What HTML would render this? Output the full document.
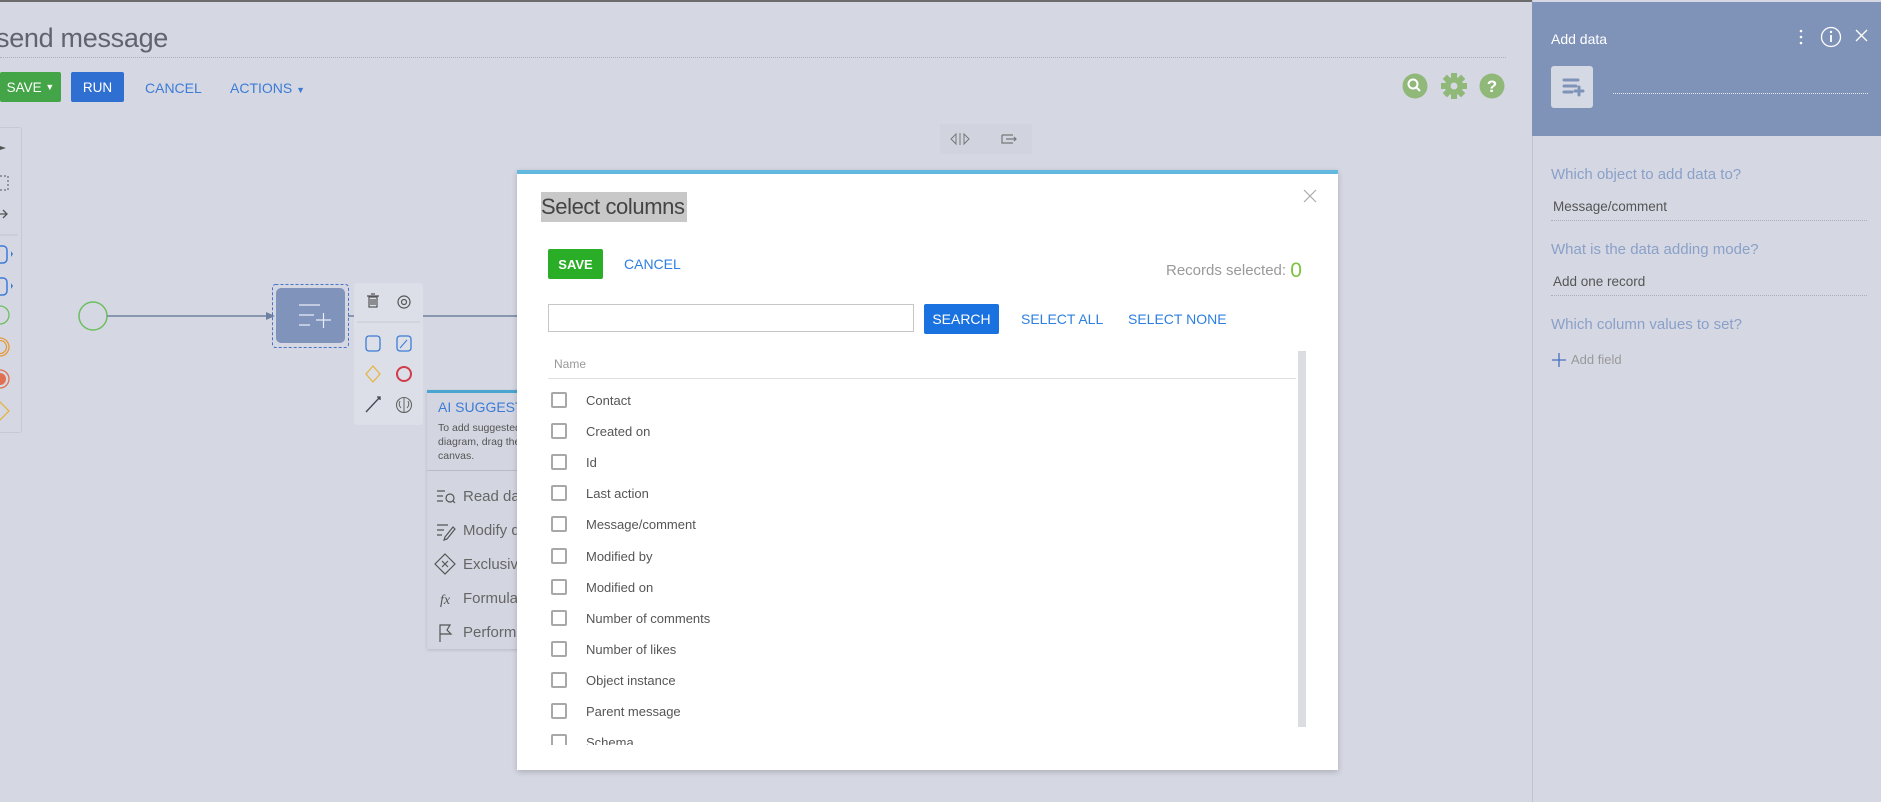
<!DOCTYPE html>
<html><head><meta charset="utf-8"><style>
*{margin:0;padding:0;box-sizing:border-box}
body{width:1881px;height:802px;overflow:hidden;background:#d5d8e3;font-family:"Liberation Sans",sans-serif;position:relative}
.a{position:absolute;white-space:nowrap}
.topline{left:0;top:0;width:1881px;height:2px;background:#6c6c6c}
.btn{position:absolute;color:#fff;font-size:14px;display:flex;align-items:center;justify-content:center;border-radius:2px}
.lnk{position:absolute;color:#3d7bd6;font-size:14px;white-space:nowrap}
.row{position:absolute;left:551px;height:20px;display:flex;align-items:center}
.cb{width:16px;height:16px;border:2px solid #a8a8a8;border-radius:2px;margin-right:19px}
.row span{font-size:13px;color:#555}
.lab{position:absolute;left:1551px;font-size:15px;color:#8aa0c8}
.val{position:absolute;left:1553px;font-size:13.5px;color:#555}
.dl{position:absolute;left:1551px;width:316px;border-top:1px dotted #a9adbd}
.ai{position:absolute;left:463px;font-size:15px;color:#666}
</style></head><body>
<div class="a topline"></div>
<div class="a" style="left:-4px;top:23px;font-size:27px;color:#5f6470;letter-spacing:-0.3px">send message</div>
<div class="a" style="left:0;top:57px;width:1506px;border-top:1px dotted #aab0c0"></div>
<div class="btn" style="left:0;top:72px;width:61px;height:30px;background:#43a547;font-size:13.5px">SAVE&nbsp;<span style="font-size:9px">▼</span></div>
<div class="btn" style="left:71px;top:72px;width:53px;height:30px;background:#2f6fd1;font-size:13.5px">RUN</div>
<div class="lnk" style="left:145px;top:80px">CANCEL</div>
<div class="lnk" style="left:230px;top:80px">ACTIONS <span style="font-size:9px">▼</span></div>
<svg class="a" style="left:1400px;top:72px" width="110" height="28">
<circle cx="15" cy="14" r="12.5" fill="#8fb879"/><circle cx="13" cy="12" r="4.5" fill="none" stroke="#fff" stroke-width="2"/><line x1="16" y1="15" x2="20" y2="19" stroke="#fff" stroke-width="2"/>
<g transform="translate(54,14)" fill="#8fb879"><circle r="9"/><rect x="-3" y="-13" width="6" height="26"/><rect x="-13" y="-3" width="26" height="6"/><rect x="-3" y="-13" width="6" height="26" transform="rotate(45)"/><rect x="-3" y="-13" width="6" height="26" transform="rotate(-45)"/><circle r="3.5" fill="#d5d8e3"/></g>
<circle cx="92" cy="14" r="12.5" fill="#8fb879"/><text x="92" y="20" text-anchor="middle" font-size="17" font-weight="bold" fill="#fff" font-family="Liberation Sans">?</text>
</svg>
<div class="a" style="left:940px;top:124px;width:92px;height:30px;background:#d1d4df"></div>
<svg class="a" style="left:950px;top:131px" width="70" height="16"><path d="M6 3 L1 8 L6 13Z M14 3 L19 8 L14 13Z" fill="none" stroke="#777" stroke-width="1"/><line x1="10" y1="2" x2="10" y2="14" stroke="#777"/><path d="M52 4 H63 M52 4 V12 H63 M56 8 H66 M64 6 L66 8 L64 10" fill="none" stroke="#777" stroke-width="1.2"/></svg>
<div class="a" style="left:-5px;top:127px;width:27px;height:306px;border:1px solid #c5c9d5;border-radius:3px;background:#d5d8e3"></div>
<svg class="a" style="left:0;top:130px" width="22" height="300">
<path d="M0 16 L6 18 L0 20Z" fill="#555"/>
<rect x="-4" y="46" width="12" height="14" fill="none" stroke="#555" stroke-dasharray="2 2"/>
<path d="M0 84 H6 M3 80 L7 84 L3 88" fill="none" stroke="#555" stroke-width="1.3"/>
<line x1="0" y1="105" x2="18" y2="105" stroke="#c0c4d0"/>
<rect x="-6" y="116" width="13" height="17" rx="4" fill="none" stroke="#3d7bd6" stroke-width="1.5"/><path d="M11 121 L13 124 L11 127Z" fill="#3d7bd6"/>
<rect x="-6" y="148" width="13" height="17" rx="4" fill="none" stroke="#3d7bd6" stroke-width="1.5"/><path d="M11 153 L13 156 L11 159Z" fill="#3d7bd6"/>
<circle cx="0" cy="185" r="9" fill="none" stroke="#6cbf5e" stroke-width="1.3"/>
<circle cx="0" cy="217" r="9" fill="none" stroke="#e69a3c" stroke-width="1.3"/><circle cx="0" cy="217" r="6.5" fill="none" stroke="#e69a3c" stroke-width="1.3"/>
<circle cx="0" cy="249" r="9" fill="none" stroke="#e07050" stroke-width="1.3"/><circle cx="0" cy="249" r="6" fill="#e07050"/>
<path d="M-2 270 L9 281 L-2 292" fill="none" stroke="#e6b23c" stroke-width="1.3"/>
</svg>
<svg class="a" style="left:0;top:270px" width="520" height="160">
<circle cx="93" cy="46" r="14" fill="none" stroke="#6cbf5e" stroke-width="1.5"/>
<line x1="107" y1="46" x2="268" y2="46" stroke="#6f80a0" stroke-width="1.5"/><path d="M266 42 L275 46 L266 50Z" fill="#6f80a0"/>
<line x1="348" y1="46" x2="520" y2="46" stroke="#6f80a0" stroke-width="1.5"/>
<rect x="272.5" y="14.5" width="76" height="63" rx="3" fill="none" stroke="#4b74c7" stroke-dasharray="3 2"/>
<rect x="276" y="18" width="69" height="55" rx="5" fill="#7f93bb"/>
<path d="M299 35 H320 M299 45 H314 M299 55 H310 M316 50 H331 M323.5 43 V58" stroke="#e8ecf5" stroke-width="1.2"/>
<rect x="354" y="13" width="69" height="142" rx="3" fill="#dcdfe8"/>
<line x1="357" y1="52" x2="420" y2="52" stroke="#c4c8d4"/>
<g fill="none" stroke="#555" stroke-width="1.2"><rect x="369" y="27" width="8" height="10"/><path d="M367 26 H379 M371 24 H375 M371 29 V35 M373 29 V35 M375 29 V35"/>
<circle cx="404" cy="32" r="6"/><circle cx="404" cy="32" r="2.5"/></g>
<rect x="366" y="66" width="14" height="15" rx="3" fill="none" stroke="#3d7bd6" stroke-width="1.3"/>
<rect x="397" y="66" width="14" height="15" rx="3" fill="none" stroke="#3d7bd6" stroke-width="1.3"/><path d="M400 78 L407 70" stroke="#3d7bd6"/>
<path d="M373 96 L380 104 L373 112 L366 104Z" fill="none" stroke="#e6b23c" stroke-width="1.2"/>
<circle cx="404" cy="104" r="7" fill="none" stroke="#d03c4c" stroke-width="2"/>
<path d="M366 142 L380 127 M377 127 H380 V130" fill="none" stroke="#445" stroke-width="1.3"/>
<circle cx="404" cy="135" r="7.5" fill="none" stroke="#666" stroke-width="1.1"/><path d="M404 128 V142 M400 131 Q398 135 401 138 M408 131 Q410 135 407 138" fill="none" stroke="#666"/>
</svg>
<div class="a" style="left:427px;top:390px;width:95px;height:259px;background:#d3d6e1;border-top:3px solid #4aa6cf;box-shadow:0 1px 3px rgba(0,0,0,.15)"></div>
<div class="a" style="left:438px;top:399px;font-size:14px;color:#3d7bd6">AI SUGGESTIONS</div>
<div class="a" style="left:438px;top:421px;font-size:10.5px;color:#555;line-height:14px">To add suggested<br>diagram, drag the<br>canvas.</div>
<div class="a" style="left:427px;top:470px;width:95px;border-top:1px solid #b8bcc8"></div>
<svg class="a" style="left:430px;top:480px" width="30" height="165" fill="none" stroke="#555" stroke-width="1.2">
<path d="M7 11 H15 M7 16 H13 M7 21 H13"/><circle cx="20" cy="18" r="4"/><path d="M23 21 L25 23"/>
<path d="M7 45 H18 M7 50 H14 M7 55 H12 M15 57 L23 47 L25 49 L17 59 L14 60Z"/>
<path d="M15 74 L25 84 L15 94 L5 84Z M12 81 L18 87 M18 81 L12 87"/>
<text x="10" y="124" font-size="14" font-style="italic" fill="#555" stroke="none" font-family="Liberation Serif">fx</text>
<path d="M10 162 V145 H20 L17 150 L21 154 H10"/>
</svg>
<div class="ai" style="top:488px">Read data</div>
<div class="ai" style="top:522px">Modify data</div>
<div class="ai" style="top:556px">Exclusive</div>
<div class="ai" style="top:590px">Formula</div>
<div class="ai" style="top:624px">Perform</div>
<div class="a" style="left:517px;top:170px;width:821px;height:600px;background:#fff;border-top:4px solid #63b8e0;box-shadow:0 2px 6px rgba(0,0,0,.2)"></div>
<div class="a" style="left:541px;top:192px;width:146px;height:30px;background:#c8c8c8"></div>
<div class="a" style="left:541px;top:194px;font-size:22px;color:#444;letter-spacing:-0.4px">Select columns</div>
<svg class="a" style="left:1303px;top:189px" width="14" height="14"><path d="M1 1 L13 13 M13 1 L1 13" stroke="#aaa" stroke-width="1.2"/></svg>
<div class="btn" style="left:548px;top:249px;width:55px;height:30px;background:#2aad27;font-weight:bold;font-size:13px">SAVE</div>
<div class="lnk" style="left:624px;top:256px;color:#2d7fe0">CANCEL</div>
<div class="a" style="left:1166px;top:257px;font-size:15px;color:#999">Records selected: <span style="color:#7dc242;font-size:21px;position:relative;top:2px">0</span></div>
<div class="a" style="left:548px;top:304px;width:366px;height:28px;border:1px solid #c6c6c6"></div>
<div class="btn" style="left:924px;top:304px;width:75px;height:30px;background:#1a72e0;font-size:14px">SEARCH</div>
<div class="lnk" style="left:1021px;top:311px;color:#2d7fe0">SELECT ALL</div>
<div class="lnk" style="left:1128px;top:311px;color:#2d7fe0">SELECT NONE</div>
<div class="a" style="left:554px;top:357px;font-size:12px;color:#999">Name</div>
<div class="a" style="left:548px;top:378px;width:748px;border-top:1px solid #e0e0e0"></div>
<div class="a" style="left:1298px;top:351px;width:8px;height:376px;background:#dcdde1"></div>
<div class="a" style="left:0;top:380px;width:1300px;height:365px;overflow:hidden">
<div class="row" style="top:10px"><div class="cb"></div><span>Contact</span></div>
<div class="row" style="top:41px"><div class="cb"></div><span>Created on</span></div>
<div class="row" style="top:72px"><div class="cb"></div><span>Id</span></div>
<div class="row" style="top:103px"><div class="cb"></div><span>Last action</span></div>
<div class="row" style="top:134px"><div class="cb"></div><span>Message/comment</span></div>
<div class="row" style="top:166px"><div class="cb"></div><span>Modified by</span></div>
<div class="row" style="top:197px"><div class="cb"></div><span>Modified on</span></div>
<div class="row" style="top:228px"><div class="cb"></div><span>Number of comments</span></div>
<div class="row" style="top:259px"><div class="cb"></div><span>Number of likes</span></div>
<div class="row" style="top:290px"><div class="cb"></div><span>Object instance</span></div>
<div class="row" style="top:321px"><div class="cb"></div><span>Parent message</span></div>
<div class="row" style="top:352px"><div class="cb"></div><span>Schema</span></div>
</div>
<div class="a" style="left:1532px;top:0;width:349px;height:802px;background:#d5d8e3;border-left:1px solid #c0c4d0"></div>
<div class="a" style="left:1532px;top:2px;width:349px;height:134px;background:#7f93b9"></div>
<div class="a" style="left:1551px;top:31px;font-size:14px;color:#fff">Add data</div>
<svg class="a" style="left:1795px;top:25px" width="80" height="26"><g fill="#fff"><circle cx="6" cy="6" r="1.3"/><circle cx="6" cy="12" r="1.3"/><circle cx="6" cy="18" r="1.3"/></g><circle cx="36" cy="12" r="9.5" fill="none" stroke="#fff" stroke-width="1.3"/><path d="M36 10 V17" stroke="#fff" stroke-width="1.8"/><circle cx="36" cy="7" r="1.2" fill="#fff"/><path d="M61 5 L72 16 M72 5 L61 16" stroke="#fff" stroke-width="1.3"/></svg>
<div class="a" style="left:1551px;top:66px;width:42px;height:42px;background:#d5d9e4;border-radius:3px"></div>
<svg class="a" style="left:1561px;top:77px" width="24" height="20"><g stroke="#7f93b9" stroke-width="3" stroke-linecap="round"><path d="M3 3 H17 M3 9 H15 M3 15 H11 M14 14 H22 M18 10 V18"/></g></svg>
<div class="a" style="left:1613px;top:93px;width:255px;border-top:1px dotted #e5e8f0"></div>
<div class="lab" style="top:166px">Which object to add data to?</div>
<div class="val" style="top:199px">Message/comment</div>
<div class="dl" style="top:220px"></div>
<div class="lab" style="top:241px">What is the data adding mode?</div>
<div class="val" style="top:274px">Add one record</div>
<div class="dl" style="top:295px"></div>
<div class="lab" style="top:316px">Which column values to set?</div>
<svg class="a" style="left:1552px;top:353px" width="14" height="14"><path d="M7 0 V14 M0 7 H14" stroke="#4b6fc0" stroke-width="1.3"/></svg>
<div class="a" style="left:1571px;top:352px;font-size:13px;color:#999">Add field</div>
</body></html>
